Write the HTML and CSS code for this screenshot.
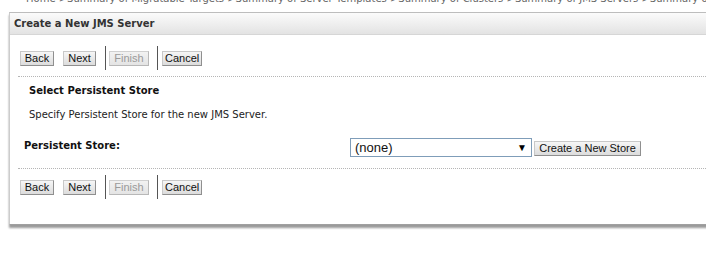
FILE: index.html
```html
<!DOCTYPE html>
<html>
<head>
<meta charset="utf-8">
<link rel="stylesheet" href="styles.css">
</head>
<body>
<div class="crumbs">Home &gt;Summary of Migratable Targets &gt;Summary of Server Templates &gt;Summary of Clusters &gt;Summary of JMS Servers &gt;Summary of Clusters &gt;<b>Summary of JMS Servers</b></div>
<div class="panel">
  <div class="panel-head">Create a New JMS Server</div>
  <div class="panel-body">
    <div class="bar">
      <button class="btn b-back">Back</button>
      <button class="btn b-next">Next</button>
      <span class="sep"></span>
      <button class="btn disabled b-finish">Finish</button>
      <span class="sep"></span>
      <button class="btn b-cancel">Cancel</button>
    </div>
    <div class="rule"></div>
    <div class="section">
      <div class="sec-title">Select Persistent Store</div>
      <div class="sec-desc">Specify Persistent Store for the new JMS Server.</div>
    </div>
    <div class="form-row">
      <div class="label">Persistent Store:</div>
      <div class="select"><span class="sel-val">(none)</span><span class="sel-arrow">&#9660;</span></div>
      <button class="btn b-create">Create a New Store</button>
    </div>
    <div class="rule rule2"></div>
    <div class="bar bar2">
      <button class="btn b-back">Back</button>
      <button class="btn b-next">Next</button>
      <span class="sep"></span>
      <button class="btn disabled b-finish">Finish</button>
      <span class="sep"></span>
      <button class="btn b-cancel">Cancel</button>
    </div>
  </div>
</div>
</body>
</html>
```
FILE: styles.css
```css
html, body {
  margin: 0;
  padding: 0;
  background: #ffffff;
  overflow: hidden;
}
body {
  width: 706px;
  height: 273px;
  font-family: "DejaVu Sans", Verdana, sans-serif;
  font-size: 10px;
  color: #222;
}
.crumbs {
  margin-top: -8px;
  margin-left: 26px;
  height: 13px;
  line-height: 13px;
  white-space: nowrap;
  color: #666;
  font-size: 10px;
}
.crumbs b {
  color: #333;
}
.panel {
  margin-top: 7px;
  margin-left: 9px;
  width: 720px;
  border-left: 1px solid #cccccc;
  border-top: 1px solid #bdbdbd;
  border-bottom: 1px solid #a0a0a0;
  box-shadow: 0 3px 2px #9a9a9a;
  background: #fff;
}
.panel-head {
  height: 21px;
  line-height: 21px;
  padding-left: 4px;
  font-weight: bold;
  font-size: 10px;
  color: #333;
  background: linear-gradient(#fbfbfb, #e3e3e3);
  border-bottom: 1px solid #d6d6d6;
}
.panel-body {
  padding: 11px 0 25px 0;
}
.bar {
  display: flex;
  align-items: center;
  height: 24px;
  padding-left: 10px;
}
.bar2 {
  margin-top: 6px;
}
.btn {
  font-family: "Liberation Sans", Arial, sans-serif;
  font-size: 11px;
  height: 15px;
  line-height: 13px;
  padding: 0 2px;
  margin: 0;
  color: #111;
  background: linear-gradient(#f6f6f6, #dcdcdc);
  border: 1px solid;
  border-color: #c8c8c8 #8f8f8f #8f8f8f #c8c8c8;
  border-radius: 0;
  box-sizing: border-box;
  white-space: nowrap;
}
.btn.disabled {
  color: #9a9a9a;
  background: linear-gradient(#f2f2f2, #e4e4e4);
  border-color: #d0d0d0 #b8b8b8 #b8b8b8 #d0d0d0;
}
.b-back { width: 34px; }
.b-next { width: 33px; margin-left: 9px; }
.b-finish { width: 40px; margin-left: 3px; }
.b-cancel { width: 40px; margin-left: 4px; }
.sep {
  width: 1px;
  height: 24px;
  background: #555;
  margin-left: 9px;
}
.b-finish + .sep { margin-left: 8px; }
.rule {
  margin: 6px 0 0 8px;
  border-top: 1px dotted #b5b5b5;
}
.section {
  padding-left: 19px;
  padding-top: 7px;
}
.sec-title {
  font-weight: bold;
  line-height: 13px;
  color: #111;
}
.sec-desc {
  margin-top: 11px;
  line-height: 13px;
  color: #222;
}
.form-row {
  display: flex;
  align-items: flex-start;
  margin-top: 17px;
  padding-left: 14px;
}
.label {
  width: 326px;
  padding-top: 1px;
  line-height: 13px;
  font-weight: bold;
  color: #111;
}
.select {
  width: 182px;
  height: 19px;
  box-sizing: border-box;
  border: 1px solid #7f9db9;
  display: flex;
  align-items: center;
  justify-content: space-between;
  padding: 0 4px 0 4px;
  font-family: "Liberation Sans", Arial, sans-serif;
  font-size: 13px;
  color: #111;
}
.sel-arrow {
  font-size: 10px;
  color: #000;
}
.b-create {
  margin-left: 2px;
  margin-top: 3px;
  width: 107px;
}
.rule2 {
  margin-top: 11px;
}
```
